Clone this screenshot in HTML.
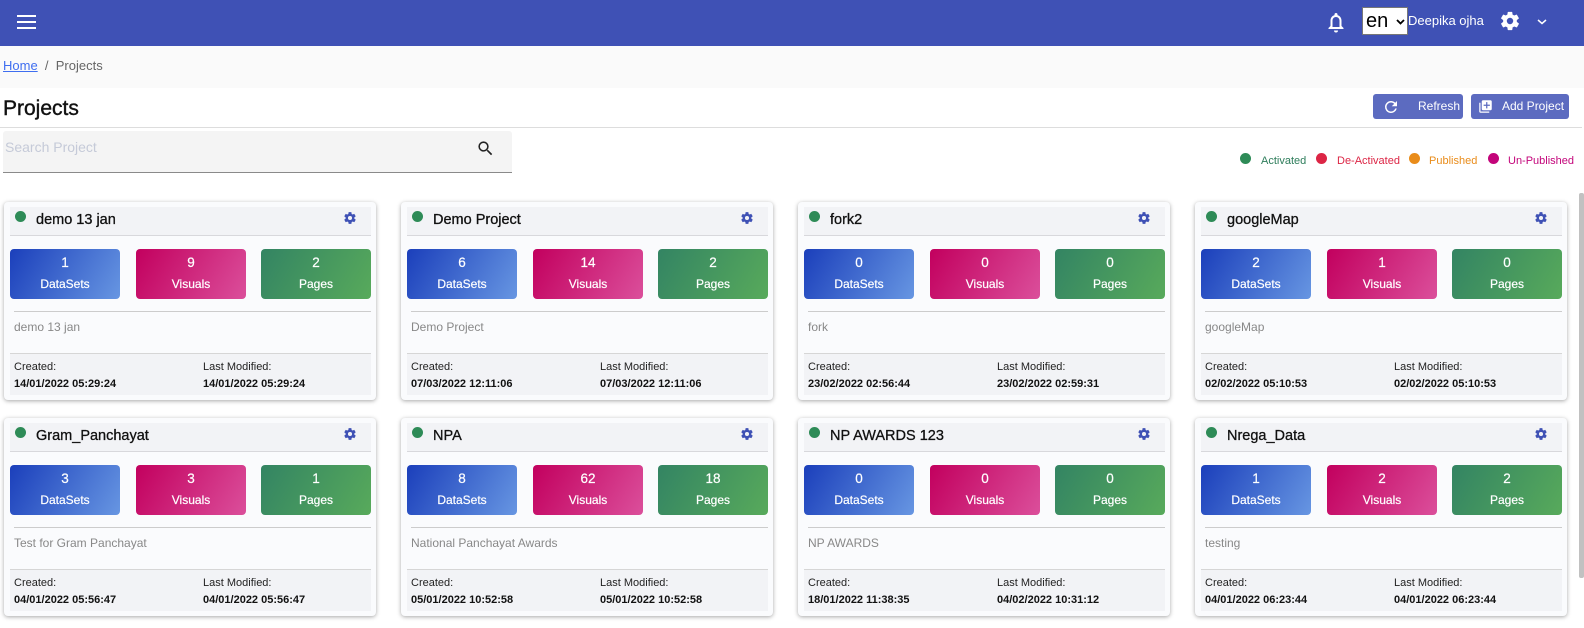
<!DOCTYPE html>
<html><head><meta charset="utf-8"><style>
*{box-sizing:border-box;margin:0;padding:0}
body{width:1584px;height:628px;overflow:hidden;background:#fff;font-family:"Liberation Sans",Roboto,sans-serif;position:relative}
.top{position:absolute;left:0;top:0;width:1584px;height:46px;background:#3f51b5}
.crumb{position:absolute;left:0;top:46px;width:1584px;height:42px;background:#fafafa;font-size:13px;color:#666;padding:12px 3px}
.crumb a{color:#3f6ef0;text-decoration:underline}
.abs{position:absolute}
.card{position:absolute;width:372px;height:198px;background:#fafbfd;border-radius:4px;box-shadow:0 1px 4px rgba(0,0,0,.35)}
.hd{position:absolute;left:6px;top:5px;width:361px;height:29px;background:#f2f3f6;border-bottom:1px solid #d8d8dc}
.dot{position:absolute;width:11px;height:11px;border-radius:50%}
.hd .dot{left:5px;top:4px;background:#2e8b57}
.hd .t{position:absolute;left:26px;top:5px;font-size:14.5px;color:#111;-webkit-text-stroke:0.3px #111}
.gear{position:absolute;right:14px;top:4px}
.tile{position:absolute;top:47px;width:110px;height:50px;border-radius:4px;color:#fff;text-align:center;font-size:12px;line-height:16px;padding-top:6px;-webkit-text-stroke:0.2px #fff}
.tile b{display:block;font-weight:normal;font-size:13.5px;margin-bottom:5px}
.t1{left:6px;background:linear-gradient(120deg,#1b3fbb,#6796e2)}
.t2{left:132px;background:linear-gradient(120deg,#c2005e,#db4f9b)}
.t3{left:257px;background:linear-gradient(120deg,#338463,#58aa5b)}
.desc{position:absolute;left:10px;top:109px;width:357px;border-top:1px solid #ccc;padding-top:8px;font-size:12px;color:#888}
.ft{position:absolute;left:6px;top:151px;width:361px;height:42px;background:#f2f3f6;border-top:1px solid #d6d6d6;font-size:11px;color:#222}
.ft div{position:absolute;top:5px;line-height:17px}
.ft b{font-weight:bold;color:#111}
.btn{position:absolute;top:94px;height:25px;background:#5c6bc0;color:#fff;font-size:12px;border-radius:3px}
.lg{position:absolute;top:155px;font-size:11px}
</style></head><body>
<div class="top">
 <svg class="abs" style="left:17px;top:15px" width="19" height="14"><rect y="0" width="19" height="2" fill="#fff"/><rect y="6" width="19" height="2" fill="#fff"/><rect y="12" width="19" height="2" fill="#fff"/></svg>
 <svg class="abs" style="left:1327px;top:11px" width="18" height="22" viewBox="0 0 18 22"><path d="M9 2a1.5 1.5 0 0 1 1.5 1.5v.6C13 4.8 14.5 7 14.5 9.7V15l2 2v1h-15v-1l2-2V9.7C3.5 7 5 4.8 7.5 4.1v-.6A1.5 1.5 0 0 1 9 2zM5.5 16h7V9.7C12.5 7.6 11 6 9 6S5.5 7.6 5.5 9.7z M7 19.5h4a2 2 0 0 1-4 0z" fill="#fff"/></svg>
 <div class="abs" style="left:1362px;top:7px;width:46px;height:28px;background:#fff;border:1px solid #777;font-size:20px;color:#000;padding-left:3px;line-height:26px">en<svg class="abs" style="left:33px;top:11px" width="9" height="6"><path d="M1 1l3.5 3.5L8 1" stroke="#000" stroke-width="1.8" fill="none"/></svg></div>
 <div class="abs" style="left:1408px;top:13px;color:#fff;font-size:13px">Deepika ojha</div>
 <svg class="abs" style="left:1499px;top:10px" width="22" height="22" viewBox="0 0 24 24"><path fill="#fff" d="M19.4 13c.04-.3.06-.65.06-1s-.02-.7-.07-1l2.1-1.65c.2-.15.24-.42.12-.64l-2-3.46c-.12-.22-.39-.3-.61-.22l-2.49 1c-.52-.4-1.08-.73-1.69-.98l-.38-2.65A.49.49 0 0 0 14 2h-4c-.25 0-.46.18-.49.42l-.38 2.65c-.61.25-1.17.59-1.69.98l-2.49-1c-.23-.09-.49 0-.61.22l-2 3.46c-.13.22-.07.49.12.64L4.57 11c-.04.32-.07.66-.07 1s.02.68.06 1l-2.1 1.65c-.2.15-.24.42-.12.64l2 3.46c.12.22.39.3.61.22l2.49-1c.52.4 1.08.73 1.69.98l.38 2.65c.03.24.24.42.49.42h4c.25 0 .46-.18.49-.42l.38-2.65c.61-.25 1.17-.59 1.69-.98l2.49 1c.23.09.49 0 .61-.22l2-3.46c.12-.22.07-.49-.12-.64L19.4 13zM12 15.5A3.5 3.5 0 1 1 12 8.5a3.5 3.5 0 0 1 0 7z"/></svg>
 <svg class="abs" style="left:1537px;top:19px" width="10" height="6"><path d="M1 1l4 3.5L9 1" stroke="#fff" stroke-width="1.5" fill="none"/></svg>
</div>
<div class="crumb"><a>Home</a> &nbsp;/ &nbsp;Projects</div>
<div class="abs" style="left:3px;top:97px;font-size:21px;color:#111;-webkit-text-stroke:0.4px #111">Projects</div>
<div class="abs" style="left:0;top:127px;width:1582px;height:1px;background:#ddd"></div>
<div class="btn" style="left:1373px;width:90px"><svg class="abs" style="left:9px;top:4px" width="18" height="18" viewBox="0 0 24 24"><path fill="#fff" d="M17.65 6.35A7.958 7.958 0 0 0 12 4a8 8 0 1 0 7.73 10h-2.08A6 6 0 1 1 12 6c1.66 0 3.14.69 4.22 1.78L13 11h7V4l-2.35 2.35z"/></svg><span class="abs" style="left:45px;top:5px">Refresh</span></div>
<div class="btn" style="left:1471px;width:98px"><svg class="abs" style="left:7px;top:5px" width="15" height="15" viewBox="0 0 24 24"><path fill="#fff" d="M4 6H2v14c0 1.1.9 2 2 2h14v-2H4V6zm16-4H8c-1.1 0-2 .9-2 2v12c0 1.1.9 2 2 2h12c1.1 0 2-.9 2-2V4c0-1.1-.9-2-2-2zm-1 9h-4v4h-2v-4H9V9h4V5h2v4h4v2z"/></svg><span class="abs" style="left:31px;top:5px">Add Project</span></div>
<div class="abs" style="left:3px;top:131px;width:509px;height:42px;background:#f4f4f4;border-bottom:1px solid #8a8a8a;border-radius:3px 3px 0 0"><span class="abs" style="left:2px;top:8px;font-size:14px;color:#c5cad8">Search Project</span>
<svg class="abs" style="left:473px;top:8px" width="19" height="19" viewBox="0 0 24 24"><path fill="#222" d="M15.5 14h-.79l-.28-.27A6.47 6.47 0 0 0 16 9.5 6.5 6.5 0 1 0 9.5 16c1.61 0 3.09-.59 4.23-1.57l.27.28v.79l5 4.99L20.49 19l-4.99-5zm-6 0C7.01 14 5 11.99 5 9.5S7.01 5 9.5 5 14 7.01 14 9.5 11.99 14 9.5 14z"/></svg></div>
<div class="dot" style="left:1240px;top:153px;background:#2e8b57"></div><span class="lg" style="left:1261px;color:#2e7d5b">Activated</span>
<div class="dot" style="left:1316px;top:153px;background:#dc2545"></div><span class="lg" style="left:1337px;color:#dc2545">De-Activated</span>
<div class="dot" style="left:1409px;top:153px;background:#e98c1a"></div><span class="lg" style="left:1429px;color:#e98c1a">Published</span>
<div class="dot" style="left:1488px;top:153px;background:#c3047a"></div><span class="lg" style="left:1508px;color:#c3047a">Un-Published</span>
<div class="abs" style="left:1579px;top:193px;width:5px;height:385px;background:#c1c1c1;border-radius:2px"></div>
<div id="cards"></div>
<script>
var d=[["demo 13 jan",1,9,2,"demo 13 jan","14/01/2022 05:29:24","14/01/2022 05:29:24"],
["Demo Project",6,14,2,"Demo Project","07/03/2022 12:11:06","07/03/2022 12:11:06"],
["fork2",0,0,0,"fork","23/02/2022 02:56:44","23/02/2022 02:59:31"],
["googleMap",2,1,0,"googleMap","02/02/2022 05:10:53","02/02/2022 05:10:53"],
["Gram_Panchayat",3,3,1,"Test for Gram Panchayat","04/01/2022 05:56:47","04/01/2022 05:56:47"],
["NPA",8,62,18,"National Panchayat Awards","05/01/2022 10:52:58","05/01/2022 10:52:58"],
["NP AWARDS 123",0,0,0,"NP AWARDS","18/01/2022 11:38:35","04/02/2022 10:31:12"],
["Nrega_Data",1,2,2,"testing","04/01/2022 06:23:44","04/01/2022 06:23:44"]];
var g='<svg class="gear" width="14" height="14" viewBox="0 0 24 24"><path fill="#3f51b5" d="M19.4 13c.04-.3.06-.65.06-1s-.02-.7-.07-1l2.1-1.65c.2-.15.24-.42.12-.64l-2-3.46c-.12-.22-.39-.3-.61-.22l-2.49 1c-.52-.4-1.08-.73-1.69-.98l-.38-2.65A.49.49 0 0 0 14 2h-4c-.25 0-.46.18-.49.42l-.38 2.65c-.61.25-1.17.59-1.69.98l-2.49-1c-.23-.09-.49 0-.61.22l-2 3.46c-.13.22-.07.49.12.64L4.57 11c-.04.32-.07.66-.07 1s.02.68.06 1l-2.1 1.65c-.2.15-.24.42-.12.64l2 3.46c.12.22.39.3.61.22l2.49-1c.52.4 1.08.73 1.69.98l.38 2.65c.03.24.24.42.49.42h4c.25 0 .46-.18.49-.42l.38-2.65c.61-.25 1.17-.59 1.69-.98l2.49 1c.23.09.49 0 .61-.22l2-3.46c.12-.22.07-.49-.12-.64L19.4 13zM12 15.5A3.5 3.5 0 1 1 12 8.5a3.5 3.5 0 0 1 0 7z"/></svg>';
var h='';d.forEach(function(c,i){var x=4+397*(i%4),y=202+216*Math.floor(i/4);
h+='<div class="card" style="left:'+x+'px;top:'+y+'px"><div class="hd"><div class="dot"></div><span class="t">'+c[0]+'</span>'+g+'</div>'+
'<div class="tile t1"><b>'+c[1]+'</b>DataSets</div><div class="tile t2"><b>'+c[2]+'</b>Visuals</div><div class="tile t3"><b>'+c[3]+'</b>Pages</div>'+
'<div class="desc">'+c[4]+'</div><div class="ft"><div style="left:4px">Created:<br><b>'+c[5]+'</b></div><div style="left:193px">Last Modified:<br><b>'+c[6]+'</b></div></div></div>';});
document.getElementById('cards').innerHTML=h;
</script>
</body></html>
